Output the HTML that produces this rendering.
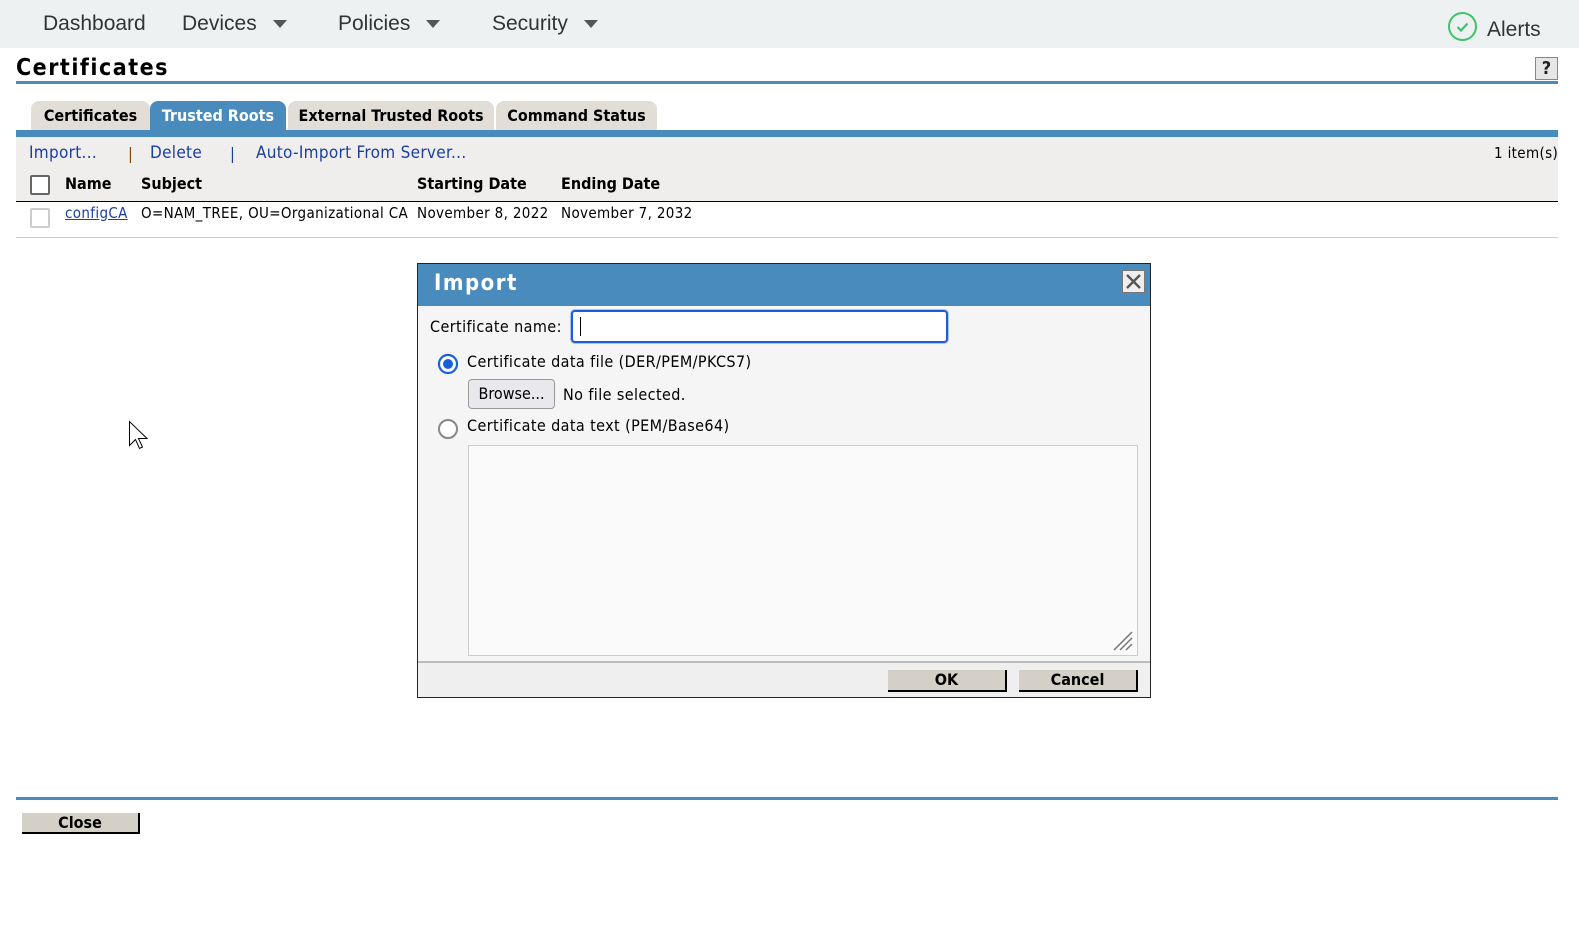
<!DOCTYPE html>
<html><head><meta charset="utf-8"><style>
*{box-sizing:border-box;margin:0;padding:0}
body{width:1579px;height:931px;background:#fff;position:relative;overflow:hidden;font-family:"DejaVu Sans Condensed","DejaVu Sans","Liberation Sans",sans-serif;color:#000}
.a{position:absolute;white-space:nowrap}
.nav{font-family:"Liberation Sans",sans-serif;font-size:21px;color:#333;top:12px}
.tri{display:inline-block;width:0;height:0;border-left:7px solid transparent;border-right:7px solid transparent;border-top:8px solid #555;vertical-align:middle;margin-left:16px}
.tab{position:absolute;top:101px;height:29px;background:#e2ded7;border-radius:8px 8px 0 0;font-weight:bold;font-size:16px;padding:5px 0 0 0;text-align:center}
.lnk{color:#1a3fa0;font-size:17px;letter-spacing:0.3px}
.r{font-size:15px;letter-spacing:0.35px}
.d{font-size:16px;letter-spacing:0.4px}
.btn{position:absolute;background:#d4d0c8;border-right:2px solid #000;border-bottom:2px solid #000;font-weight:bold;font-size:16px;text-align:center}
</style></head><body>
<div class="a" style="left:0;top:0;width:1579px;height:48px;background:#eef1f2"></div>
<div class="a nav" style="left:43px">Dashboard</div>
<div class="a nav" style="left:182px">Devices<span class="tri"></span></div>
<div class="a nav" style="left:338px">Policies<span class="tri"></span></div>
<div class="a nav" style="left:492px">Security<span class="tri"></span></div>
<svg class="a" style="left:1447px;top:11px" width="32" height="32"><circle cx="15.5" cy="15.5" r="13.5" fill="none" stroke="#3cc46a" stroke-width="2"/><path d="M10.5 16l3.5 3.5 6.5-7" fill="none" stroke="#3cc46a" stroke-width="2.2"/></svg>
<div class="a nav" style="left:1487px;top:18px;font-size:21px">Alerts</div>

<div class="a" style="left:16px;top:55px;font-size:23px;font-weight:bold;letter-spacing:1.5px">Certificates</div>
<div class="a" style="left:1535px;top:57px;width:23px;height:23px;background:#e6e6e6;border:1px solid #888;font-weight:bold;font-size:18px;text-align:center;line-height:21px;color:#222">?</div>
<div class="a" style="left:16px;top:81px;width:1542px;height:3px;background:#4a8bbd"></div>

<div class="tab" style="left:31px;width:119px">Certificates</div>
<div class="tab" style="left:150px;width:136px;background:#4a8bbd;color:#fff">Trusted Roots</div>
<div class="tab" style="left:288px;width:206px">External Trusted Roots</div>
<div class="tab" style="left:496px;width:161px">Command Status</div>
<div class="a" style="left:16px;top:130px;width:1542px;height:7px;background:#4a8bbd"></div>
<div class="a" style="left:16px;top:137px;width:1542px;height:64px;background:#efeeec"></div>
<div class="a lnk" style="left:29px;top:143px">Import...</div>
<div class="a" style="left:128px;top:144px;font-size:16px;color:#8a4a00">|</div>
<div class="a lnk" style="left:150px;top:143px">Delete</div>
<div class="a" style="left:230px;top:144px;font-size:16px;color:#1a3fa0">|</div>
<div class="a lnk" style="left:256px;top:143px">Auto-Import From Server...</div>
<div class="a r" style="left:1494px;top:144px">1 item(s)</div>
<div class="a" style="left:30px;top:175px;width:20px;height:20px;border:2px solid #666;border-radius:2px;background:#fff"></div>
<div class="a" style="left:65px;top:174px;font-size:16px;font-weight:bold">Name</div>
<div class="a" style="left:141px;top:174px;font-size:16px;font-weight:bold">Subject</div>
<div class="a" style="left:417px;top:174px;font-size:16px;font-weight:bold">Starting Date</div>
<div class="a" style="left:561px;top:174px;font-size:16px;font-weight:bold">Ending Date</div>
<div class="a" style="left:16px;top:201px;width:1542px;height:1px;background:#000"></div>
<div class="a" style="left:30px;top:208px;width:20px;height:20px;border:2px solid #ccc;border-radius:2px"></div>
<div class="a r" style="left:65px;top:204px;color:#1a3fa0;text-decoration:underline">configCA</div>
<div class="a r" style="left:141px;top:204px">O=NAM_TREE, OU=Organizational CA</div>
<div class="a r" style="left:417px;top:204px">November 8, 2022</div>
<div class="a r" style="left:561px;top:204px">November 7, 2032</div>
<div class="a" style="left:16px;top:237px;width:1542px;height:1px;background:#ccc"></div>

<svg class="a" style="left:128px;top:420px" width="22" height="32"><path d="M1.5 1.5v24l6-6 4 9 3-1.5-4-8.5h8.5z" fill="#fff" stroke="#000" stroke-width="1"/></svg>

<div class="a" style="left:417px;top:263px;width:734px;height:435px;border:1px solid #222;background:#f5f5f5"></div>
<div class="a" style="left:418px;top:264px;width:732px;height:42px;background:#4a8bbd"></div>
<div class="a" style="left:434px;top:271px;font-size:22px;font-weight:bold;color:#fff;letter-spacing:1.5px">Import</div>
<svg class="a" style="left:1122px;top:270px" width="23" height="23"><rect x="0.5" y="0.5" width="22" height="22" fill="#eee" stroke="#777"/><path d="M5 5l13 13M18 5L5 18" stroke="#555" stroke-width="2.4"/></svg>
<div class="a d" style="left:430px;top:317px">Certificate name:</div>
<div class="a" style="left:571px;top:310px;width:377px;height:33px;border:2px solid #1a5fd8;border-radius:4px;background:#fff;box-shadow:0 0 0 1px #a9c4e8"></div>
<div class="a" style="left:580px;top:317px;width:1px;height:19px;background:#000"></div>
<svg class="a" style="left:437px;top:353px" width="22" height="22"><circle cx="11" cy="11" r="9" fill="#fff" stroke="#1a5fd8" stroke-width="2.2"/><circle cx="11" cy="11" r="5" fill="#1a5fd8"/></svg>
<div class="a d" style="left:467px;top:352px">Certificate data file (DER/PEM/PKCS7)</div>
<div class="a d" style="left:468px;top:379px;width:87px;height:30px;border:1px solid #999;border-radius:4px;background:#e9e9ed;text-align:center;line-height:28px;letter-spacing:0">Browse...</div>
<div class="a d" style="left:563px;top:385px">No file selected.</div>
<svg class="a" style="left:437px;top:418px" width="22" height="22"><circle cx="11" cy="11" r="9" fill="#fff" stroke="#888" stroke-width="2"/></svg>
<div class="a d" style="left:467px;top:416px">Certificate data text (PEM/Base64)</div>
<div class="a" style="left:468px;top:445px;width:670px;height:211px;border:1px solid #ccc;background:#fafafa"></div>
<svg class="a" style="left:1112px;top:630px" width="22" height="22"><path d="M20 2L2 20M20 8L8 20M20 14L14 20" stroke="#777" stroke-width="1.5"/></svg>
<div class="a" style="left:418px;top:661px;width:732px;height:2px;background:#bbb"></div>
<div class="a" style="left:418px;top:663px;width:732px;height:34px;background:#efefef"></div>
<div class="btn" style="left:888px;top:670px;width:119px;height:22px;line-height:20px">OK</div>
<div class="btn" style="left:1019px;top:670px;width:119px;height:22px;line-height:20px">Cancel</div>

<div class="a" style="left:16px;top:797px;width:1542px;height:3px;background:#4a8bbd"></div>
<div class="btn" style="left:22px;top:813px;width:118px;height:21px;line-height:20px">Close</div>
</body></html>
